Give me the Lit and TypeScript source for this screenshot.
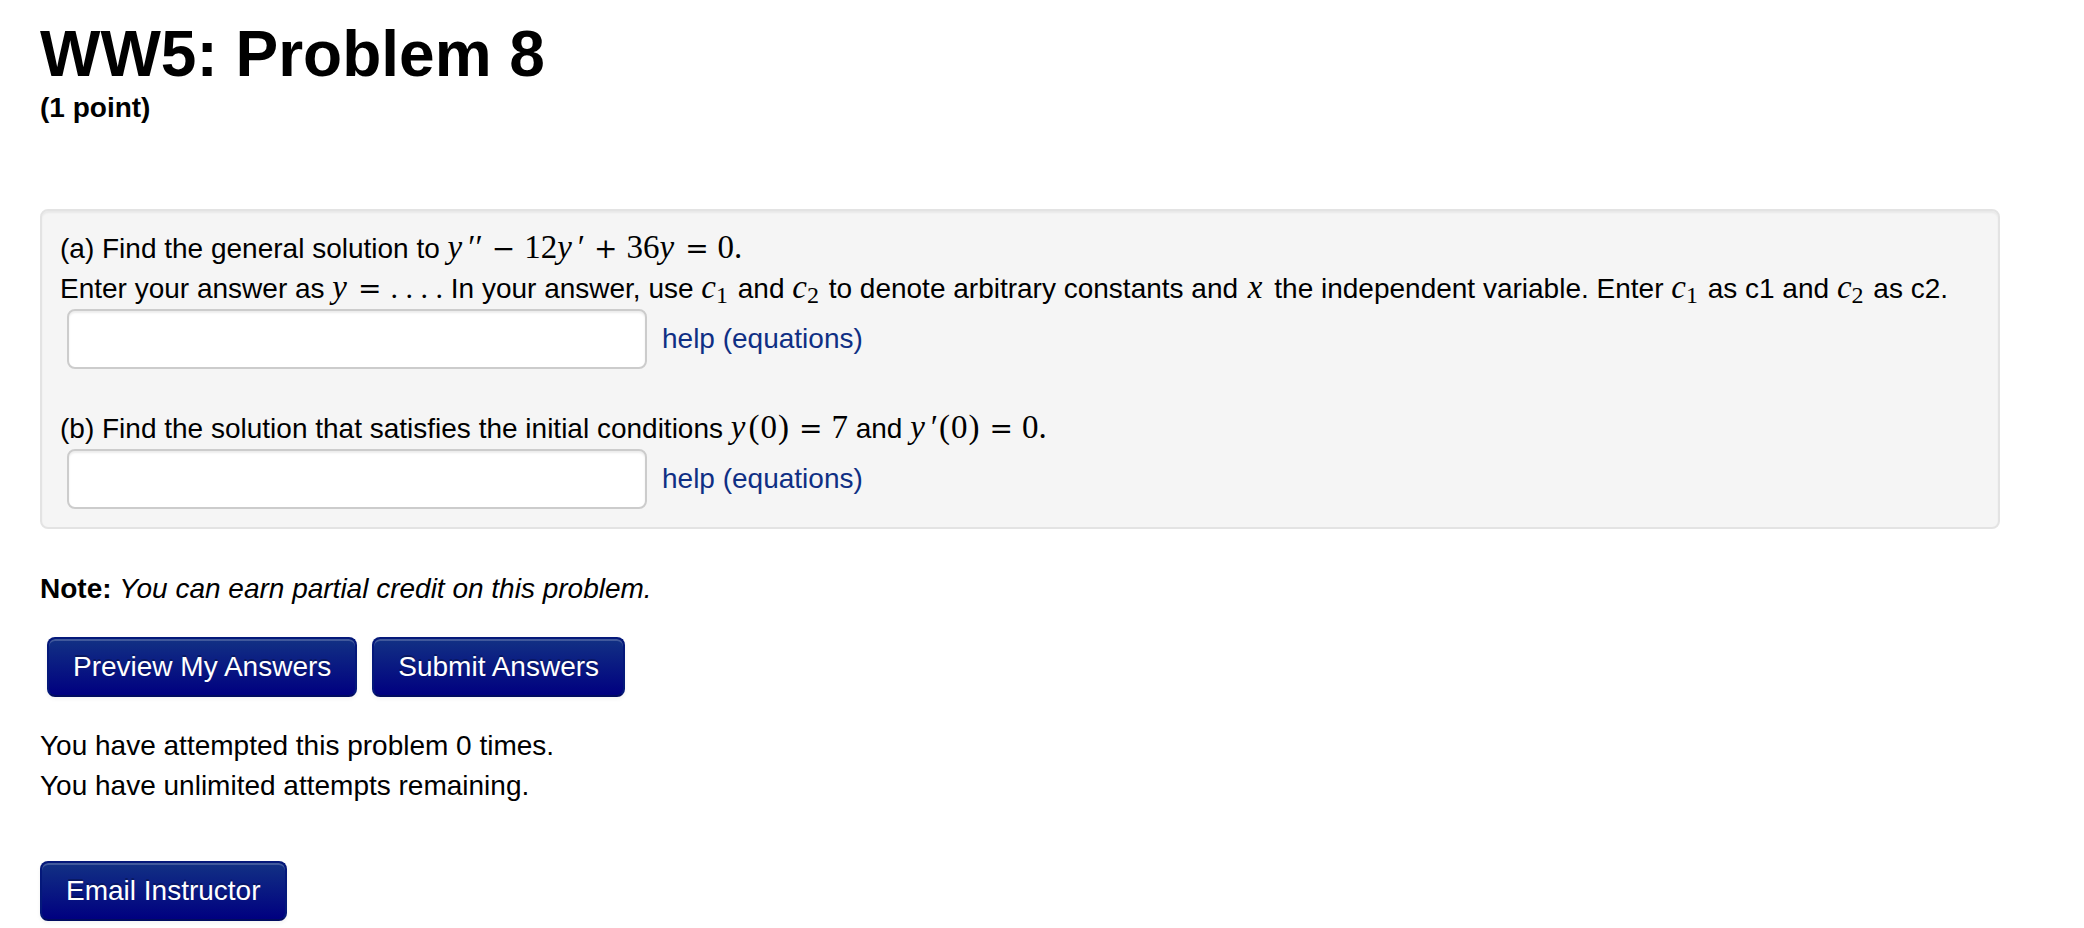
import { LitElement, html, css } from "lit";
import { customElement, property } from "lit/decorators.js";

const variable = (name: string) => html`<i class="var">${name}</i>`;
const operator = (sign: string) => html`<span class="op">${sign}</span>`;
const prime = (marks: string) => html`<i class="prime">${marks}</i>`;
const argument = (value: string) => html`<span class="paren">(</span>${value}<span class="paren">)</span>`;
const constant = (index: string) =>
  html`<span class="math"><i>c</i><span class="sub">${index}</span></span>`;

@customElement("answer-row")
export class AnswerRow extends LitElement {
  @property() name = "";

  static styles = css`
    :host {
      display: block;
    }
    .question {
      display: block;
    }
    .row {
      display: flex;
      align-items: center;
      gap: 15px;
      padding-left: 7px;
    }
    .answer {
      box-sizing: border-box;
      width: 580px;
      max-width: 100%;
      height: 60px;
      margin: 0;
      padding: 8px 12px;
      border: 2px solid #ccc;
      border-radius: 8px;
      background: #fff;
      box-shadow: inset 0 2px 2px rgba(0, 0, 0, 0.075);
      color: #555;
      font: inherit;
    }
    .help {
      color: #0f2f84;
      text-decoration: none;
    }
  `;

  render() {
    return html`
      <label class="question" for=${this.name}><slot></slot></label>
      <div class="row">
        <input class="answer" id=${this.name} name=${this.name} type="text" autocomplete="off" />
        <a class="help" href="#equations">help (equations)</a>
      </div>
    `;
  }
}

@customElement("app-root")
export class AppRoot extends LitElement {
  static styles = css`
    :host {
      display: block;
      padding: 21px 84px 7px 40px;
      color: #000;
      font: 28px/40px "Liberation Sans", Arial, sans-serif;
    }
    .title {
      margin: 0;
      font-size: 64px;
      line-height: 66px;
      font-weight: bold;
    }
    .points {
      margin: 0 0 80px;
      font-size: 28px;
      font-weight: bold;
      line-height: 42px;
    }
    .well {
      display: grid;
      gap: 40px;
      padding: 18px;
      border: 2px solid #e3e3e3;
      border-radius: 8px;
      background: #f5f5f5;
      box-shadow: inset 0 2px 2px rgba(0, 0, 0, 0.05);
    }
    .line {
      display: block;
    }
    .math {
      font-family: "Liberation Serif", "Times New Roman", serif;
      font-size: 33px;
      line-height: 0;
      white-space: nowrap;
    }
    .var {
      padding-right: 2px;
    }
    .op {
      margin: 0 9px;
      font-family: "DejaVu Serif", serif;
      font-size: 28px;
    }
    .prime {
      margin: 0 2px;
    }
    .paren {
      margin: 0 1px;
    }
    .sub {
      position: relative;
      top: 5px;
      margin-right: 2px;
      font-size: 24px;
    }
    .dots {
      font-size: 30px;
    }
    .lone {
      margin: 0 2px;
    }
    .note {
      margin: 40px 0 28px;
    }
    .actions {
      display: flex;
      gap: 15px;
      padding-left: 7px;
    }
    .btn {
      box-sizing: border-box;
      height: 60px;
      margin: 0;
      padding: 0 24px;
      border: 2px solid #04187a;
      border-bottom-color: #000b60;
      border-radius: 8px;
      background: linear-gradient(#123184, #000080) padding-box, #04187a;
      box-shadow: inset 0 2px 0 rgba(255, 255, 255, 0.2), 0 2px 4px rgba(0, 0, 0, 0.05);
      color: #fff;
      font: inherit;
      text-shadow: 0 -2px 0 rgba(0, 0, 0, 0.25);
      cursor: pointer;
    }
    .attempts {
      margin: 29px 0 55px;
    }
  `;

  render() {
    return html`
      <main>
        <h1 class="title">WW5: Problem 8</h1>
        <p class="points">(1 point)</p>

        <section class="well">
          <answer-row name="general">
            <span class="line">(a) Find the general solution to
              <span class="math">${variable("y")}${prime("′′")}${operator("−")}12${variable("y")}${prime("′")}${operator("+")}36${variable("y")}${operator("=")}0.</span></span>
            <span class="line">Enter your answer as
              <span class="math">${variable("y")}${operator("=")}<span class="dots">. . . .</span></span>
              In your answer, use ${constant("1")} and ${constant("2")} to denote arbitrary constants
              and <span class="math lone">${variable("x")}</span> the independent variable. Enter
              ${constant("1")} as c1 and ${constant("2")} as c2.</span>
          </answer-row>
          <answer-row name="particular">
            <span class="line">(b) Find the solution that satisfies the initial conditions
              <span class="math">${variable("y")}${argument("0")}${operator("=")}7</span> and
              <span class="math">${variable("y")}${prime("′")}${argument("0")}${operator("=")}0.</span></span>
          </answer-row>
        </section>

        <p class="note"><b>Note:</b> <i>You can earn partial credit on this problem.</i></p>

        <div class="actions">
          <button class="btn" type="button">Preview My Answers</button>
          <button class="btn" type="button">Submit Answers</button>
        </div>

        <p class="attempts">
          You have attempted this problem 0 times.<br />
          You have unlimited attempts remaining.
        </p>

        <button class="btn" type="button">Email Instructor</button>
      </main>
    `;
  }
}
